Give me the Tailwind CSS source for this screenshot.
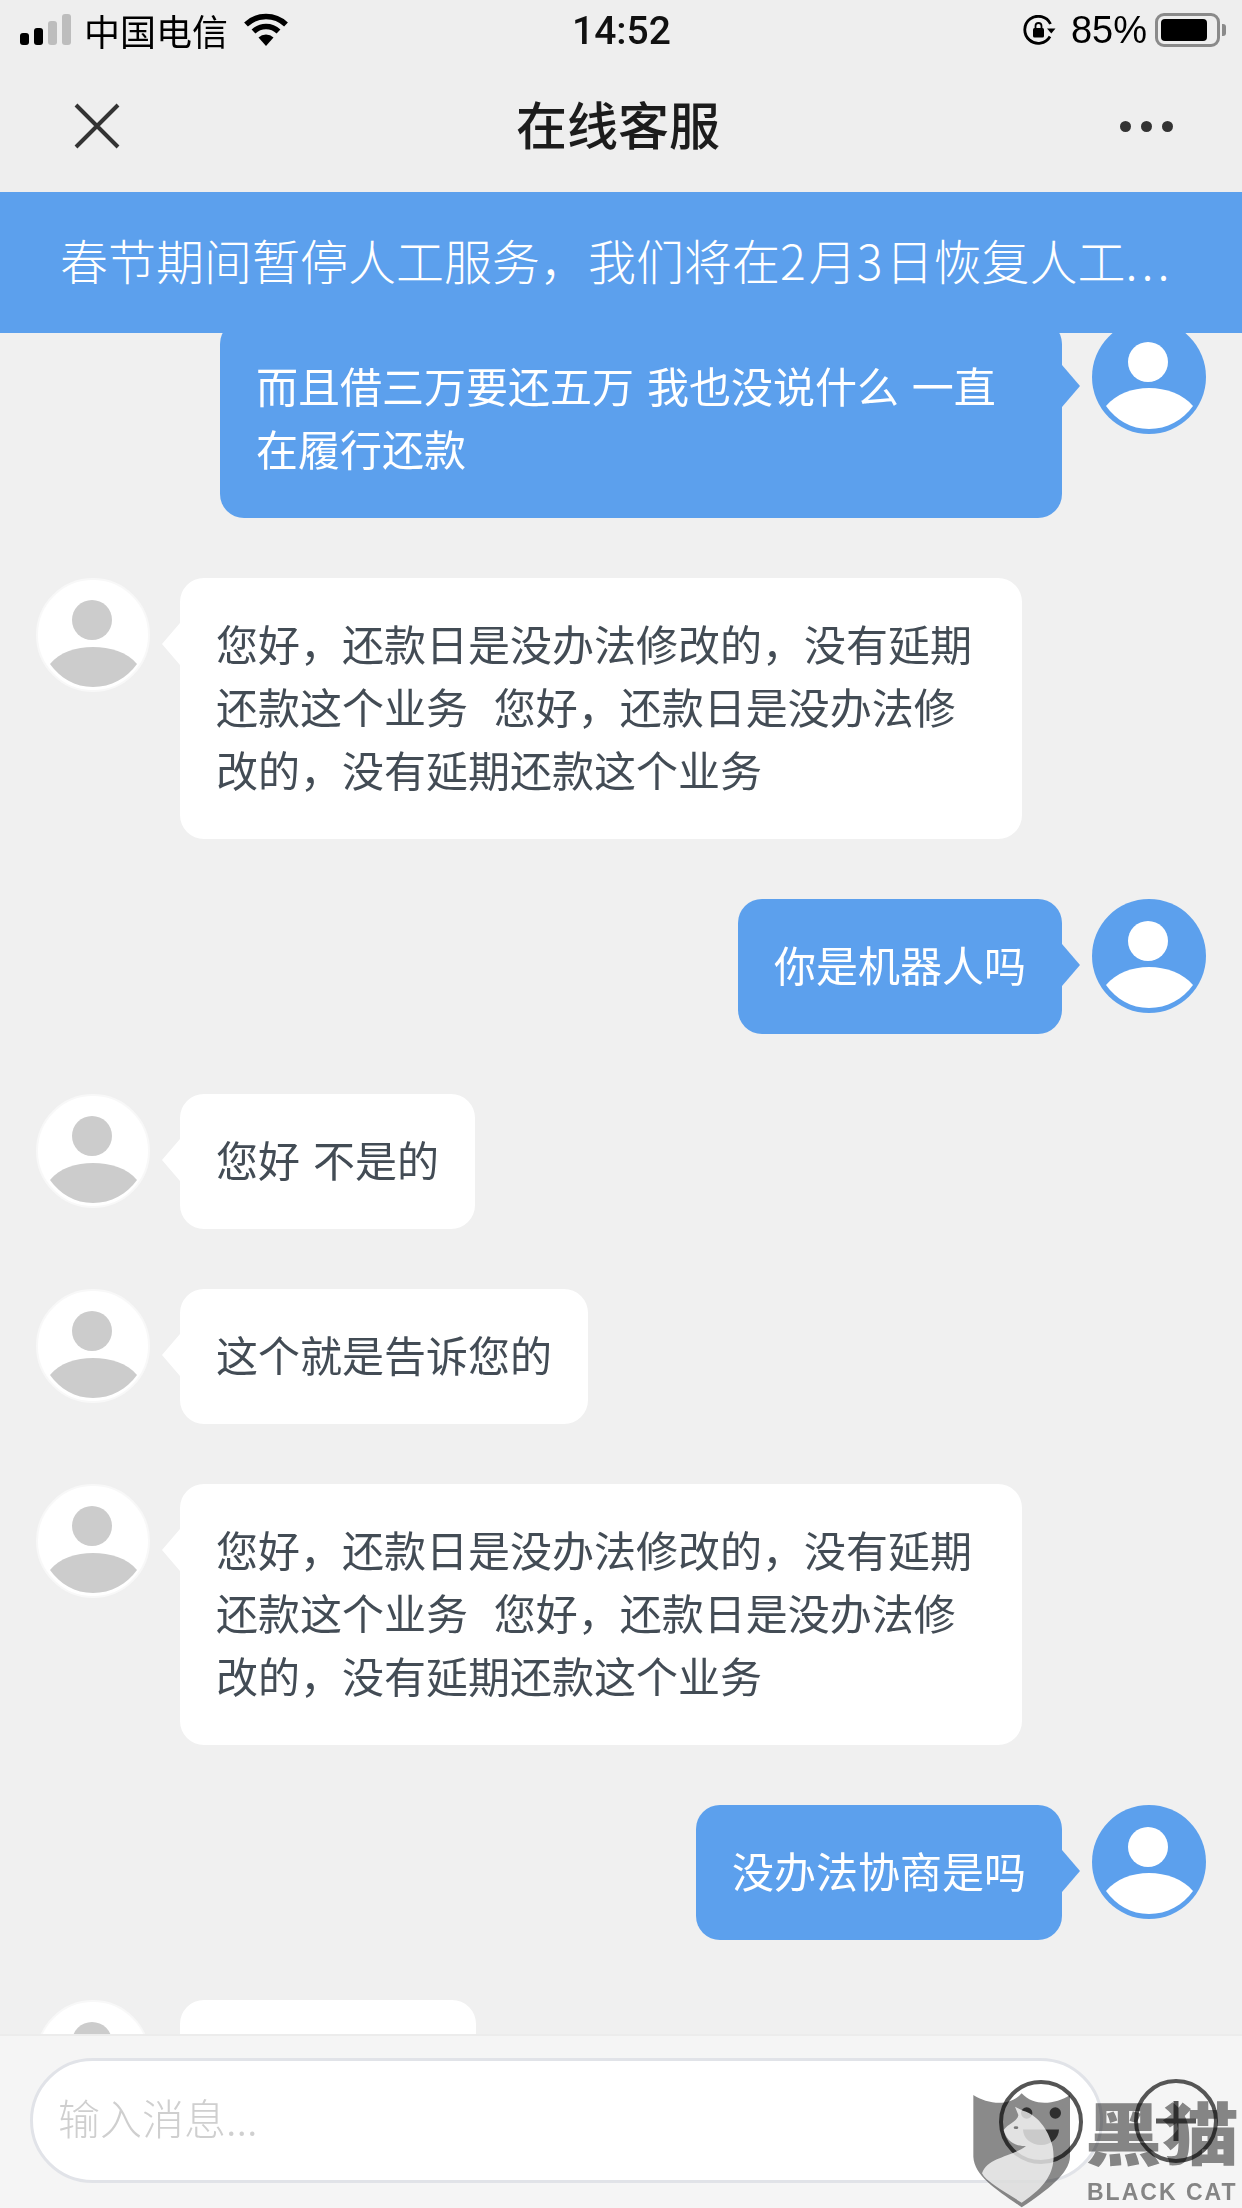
<!DOCTYPE html>
<html lang="zh-CN">
<head>
  <meta charset="UTF-8" />
  <meta name="viewport" content="width=device-width, initial-scale=1.0"/>
  <title>在线客服</title>
  <script src="https://cdn.jsdelivr.net/npm/@tailwindcss/browser@4"></script>
</head>
<body class="w-[1242px] h-[2208px] overflow-hidden relative flex flex-col bg-[#f0f0f0] font-['Noto_Sans_CJK_SC','Liberation_Sans',sans-serif]">

  <!-- Status bar -->
  <div class="h-[60px] shrink-0 bg-[#eeeeee] relative flex items-center justify-between pl-[20px] pr-[16px] text-black">
    <div class="flex items-center">
      <div class="flex items-end gap-[5px] h-[31px] mt-[-1px]">
        <div class="w-[9px] h-[12px] rounded-[3px] bg-black"></div>
        <div class="w-[9px] h-[17px] rounded-[3px] bg-black"></div>
        <div class="w-[9px] h-[24px] rounded-[3px] bg-[#bdbdbd]"></div>
        <div class="w-[9px] h-[31px] rounded-[3px] bg-[#bdbdbd]"></div>
      </div>
      <span class="ml-[13px] text-[36px] leading-none">中国电信</span>
      <svg class="ml-[15px] mt-[-2px]" width="46" height="33" viewBox="0 0 46 33" fill="none">
        <path d="M3 11.5A29 29 0 0 1 43 11.5" stroke="#000" stroke-width="5.5"/>
        <path d="M10.5 18.5A18 18 0 0 1 35.5 18.5" stroke="#000" stroke-width="5.5"/>
        <path d="M23 33L15.5 24.5A11 11 0 0 1 30.5 24.5Z" fill="#000"/>
      </svg>
    </div>
    <span class="absolute left-[572px] top-[10px] text-[39px] leading-[42px] font-medium font-['Roboto',sans-serif] text-[#111]">14:52</span>
    <div class="flex items-center">
      <svg width="33" height="31" viewBox="0 0 33 31" fill="none">
        <path d="M27 21.5A13.5 13.5 0 1 1 27.500 9" stroke="#000" stroke-width="2.8"/>
        <path d="M24 13.500h8.500l-4.200 5z" fill="#000"/>
        <rect x="10" y="13" width="11" height="9.500" rx="1.500" fill="#000"/>
        <path d="M12.500 13.500v-2.500a3 3 0 0 1 6 0v2.500" stroke="#000" stroke-width="1.800"/>
      </svg>
      <span class="ml-[15px] text-[38px] leading-none font-['Liberation_Sans',sans-serif]">85%</span>
      <div class="ml-[8px] w-[65px] h-[34px] rounded-[9px] border-[3px] border-[#8a8a8a] p-[3px] pr-[10px]">
        <div class="w-full h-full rounded-[4px] bg-black"></div>
      </div>
      <div class="ml-[2px] w-[4px] h-[12px] rounded-r-[3px] bg-[#8a8a8a]"></div>
    </div>
  </div>

  <!-- Nav bar -->
  <div class="h-[132px] shrink-0 bg-[#eeeeee] relative flex items-center justify-center">
    <svg class="absolute left-[74px] top-[43px]" width="46" height="46" viewBox="0 0 46 46" fill="none">
      <path d="M2 2L44 44M44 2L2 44" stroke="#333" stroke-width="4"/>
    </svg>
    <h1 class="text-[51px] leading-none font-medium text-[#1c1c1c] mt-[-6px] mr-[6px]">在线客服</h1>
    <div class="absolute left-[1120px] top-[61px] flex gap-[10px]">
      <div class="w-[11px] h-[11px] rounded-full bg-[#333]"></div>
      <div class="w-[11px] h-[11px] rounded-full bg-[#333]"></div>
      <div class="w-[11px] h-[11px] rounded-full bg-[#333]"></div>
    </div>
  </div>

  <!-- Chat -->
  <div class="relative flex-1 overflow-hidden">
    <div class="absolute top-0 left-0 right-0 z-10 h-[141px] bg-[#5ca0ed] flex items-center pl-[60px] pb-[8px] text-white text-[48px] leading-none font-light whitespace-nowrap">春节期间暂停人工服务，我们将在<span class="tracking-[3px]">2</span>月<span class="tracking-[3px]">3</span>日恢复人工<span class="tracking-[4px]">...</span></div>

    <div class="pt-[128px] px-[36px] flex flex-col gap-[60px] text-[42px] leading-[63px] [word-spacing:3.5px] whitespace-pre-wrap text-[#434c55]">

      <div class="flex justify-end">
        <div class="relative w-[842px] rounded-[24px] bg-[#5ca0ed] text-white px-[36px] pt-[33px] pb-[39px] mr-[30px]">而且借三万要还五万 我也没说什么 一直
在履行还款<div class="absolute right-[-18px] top-[45px] w-[18px] h-[42px] bg-[#5ca0ed] [clip-path:polygon(0_0,100%_50%,0_100%)]"></div></div>
        <svg class="shrink-0" width="114" height="114" viewBox="0 0 114 114"><circle cx="57" cy="57" r="57" fill="#5ca0ed"/><circle cx="56" cy="42" r="20" fill="#fff"/><path d="M14 86C24 74 40 68 57 68C74 68 91 74 101 86C91 100 75 109 57 109C39 109 24 100 14 86Z" fill="#fff"/></svg>
      </div>

      <div class="flex">
        <svg class="shrink-0" width="114" height="114" viewBox="0 0 114 114"><circle cx="57" cy="57" r="56" fill="#fff" stroke="#f8f8f8" stroke-width="2"/><circle cx="56" cy="42" r="20" fill="#ccc"/><path d="M14 86C24 74 40 69 57 69C74 69 91 74 101 86C91 100 75 109 57 109C39 109 24 100 14 86Z" fill="#ccc"/></svg>
        <div class="relative ml-[30px] w-[842px] rounded-[24px] bg-white px-[36px] pt-[33px] pb-[39px]">您好，还款日是没办法修改的，没有延期
还款这个业务  您好，还款日是没办法修
改的，没有延期还款这个业务<div class="absolute left-[-18px] top-[45px] w-[18px] h-[42px] bg-white [clip-path:polygon(100%_0,0_50%,100%_100%)]"></div></div>
      </div>

      <div class="flex justify-end">
        <div class="relative rounded-[24px] bg-[#5ca0ed] text-white px-[36px] pt-[33px] pb-[39px] mr-[30px]">你是机器人吗<div class="absolute right-[-18px] top-[45px] w-[18px] h-[42px] bg-[#5ca0ed] [clip-path:polygon(0_0,100%_50%,0_100%)]"></div></div>
        <svg class="shrink-0" width="114" height="114" viewBox="0 0 114 114"><circle cx="57" cy="57" r="57" fill="#5ca0ed"/><circle cx="56" cy="42" r="20" fill="#fff"/><path d="M14 86C24 74 40 68 57 68C74 68 91 74 101 86C91 100 75 109 57 109C39 109 24 100 14 86Z" fill="#fff"/></svg>
      </div>

      <div class="flex">
        <svg class="shrink-0" width="114" height="114" viewBox="0 0 114 114"><circle cx="57" cy="57" r="56" fill="#fff" stroke="#f8f8f8" stroke-width="2"/><circle cx="56" cy="42" r="20" fill="#ccc"/><path d="M14 86C24 74 40 69 57 69C74 69 91 74 101 86C91 100 75 109 57 109C39 109 24 100 14 86Z" fill="#ccc"/></svg>
        <div class="relative ml-[30px] rounded-[24px] bg-white px-[36px] pt-[33px] pb-[39px]">您好 不是的<div class="absolute left-[-18px] top-[45px] w-[18px] h-[42px] bg-white [clip-path:polygon(100%_0,0_50%,100%_100%)]"></div></div>
      </div>

      <div class="flex">
        <svg class="shrink-0" width="114" height="114" viewBox="0 0 114 114"><circle cx="57" cy="57" r="56" fill="#fff" stroke="#f8f8f8" stroke-width="2"/><circle cx="56" cy="42" r="20" fill="#ccc"/><path d="M14 86C24 74 40 69 57 69C74 69 91 74 101 86C91 100 75 109 57 109C39 109 24 100 14 86Z" fill="#ccc"/></svg>
        <div class="relative ml-[30px] rounded-[24px] bg-white px-[36px] pt-[33px] pb-[39px]">这个就是告诉您的<div class="absolute left-[-18px] top-[45px] w-[18px] h-[42px] bg-white [clip-path:polygon(100%_0,0_50%,100%_100%)]"></div></div>
      </div>

      <div class="flex">
        <svg class="shrink-0" width="114" height="114" viewBox="0 0 114 114"><circle cx="57" cy="57" r="56" fill="#fff" stroke="#f8f8f8" stroke-width="2"/><circle cx="56" cy="42" r="20" fill="#ccc"/><path d="M14 86C24 74 40 69 57 69C74 69 91 74 101 86C91 100 75 109 57 109C39 109 24 100 14 86Z" fill="#ccc"/></svg>
        <div class="relative ml-[30px] w-[842px] rounded-[24px] bg-white px-[36px] pt-[33px] pb-[39px]">您好，还款日是没办法修改的，没有延期
还款这个业务  您好，还款日是没办法修
改的，没有延期还款这个业务<div class="absolute left-[-18px] top-[45px] w-[18px] h-[42px] bg-white [clip-path:polygon(100%_0,0_50%,100%_100%)]"></div></div>
      </div>

      <div class="flex justify-end">
        <div class="relative rounded-[24px] bg-[#5ca0ed] text-white px-[36px] pt-[33px] pb-[39px] mr-[30px]">没办法协商是吗<div class="absolute right-[-18px] top-[45px] w-[18px] h-[42px] bg-[#5ca0ed] [clip-path:polygon(0_0,100%_50%,0_100%)]"></div></div>
        <svg class="shrink-0" width="114" height="114" viewBox="0 0 114 114"><circle cx="57" cy="57" r="57" fill="#5ca0ed"/><circle cx="56" cy="42" r="20" fill="#fff"/><path d="M14 86C24 74 40 68 57 68C74 68 91 74 101 86C91 100 75 109 57 109C39 109 24 100 14 86Z" fill="#fff"/></svg>
      </div>

      <div class="flex">
        <svg class="shrink-0" width="114" height="114" viewBox="0 0 114 114"><circle cx="57" cy="57" r="56" fill="#fff" stroke="#f8f8f8" stroke-width="2"/><circle cx="56" cy="42" r="20" fill="#ccc"/><path d="M14 86C24 74 40 69 57 69C74 69 91 74 101 86C91 100 75 109 57 109C39 109 24 100 14 86Z" fill="#ccc"/></svg>
        <div class="relative ml-[30px] w-[296px] h-[135px] rounded-[24px] bg-white"></div>
      </div>
    </div>
  </div>

  <!-- Input bar -->
  <div class="h-[174px] shrink-0 bg-[#f5f5f5] border-t-2 border-[#ececec] flex items-center pl-[30px] pb-[3px]">
    <div class="w-[1073px] h-[125px] rounded-full border-[3px] border-[#e1e3e8] bg-white flex items-center justify-between pl-[25px] pr-[17px] text-[42px] leading-none text-[#cfcfcf] font-light">
      <span class="mb-[8px]">输入消息...</span>
      <svg class="mt-[2px]" width="84" height="84" viewBox="0 0 84 84" fill="none">
        <circle cx="42" cy="42" r="40" stroke="#555" stroke-width="4"/>
        <circle cx="27.700" cy="33" r="5.700" fill="#555"/>
        <circle cx="56.300" cy="33" r="5.700" fill="#555"/>
        <path d="M24 49.500H60C60 58 52 65 42 65C32 65 24 58 24 49.500Z" fill="#555"/>
      </svg>
    </div>
    <div class="ml-[31px] w-[84px] h-[84px] rounded-full border-[4px] border-[#555] flex items-center justify-center">
      <svg width="40" height="40" viewBox="0 0 40 40"><path d="M0 20H40M20 0V40" stroke="#555" stroke-width="5" stroke-linecap="round"/></svg>
    </div>
  </div>

  <!-- Watermark -->
  <div class="absolute left-[821px] top-[1960px] w-[421px] h-[248px]">
    <svg class="absolute inset-0 mix-blend-multiply" width="421" height="248" viewBox="0 0 1263 744">
      <path d="M457 405C500 432 565 442 602 400C640 442 705 432 747 405V590C745 640 680 690 602 742C530 690 460 650 457 590Z" fill="#8a8a8a"/>
    </svg>
    <svg class="absolute inset-0" width="421" height="248" viewBox="0 0 1263 744">
      <path d="M582 440L606 452C645 462 682 505 695 560C705 620 690 670 602 728C545 692 495 665 483 640C500 592 570 592 615 558C580 560 555 540 548 510C562 490 590 484 592 465Z" fill="#fff" opacity="0.75"/>
      <ellipse cx="585" cy="503" rx="7" ry="4" fill="#777"/>
    </svg>
    <div class="absolute left-[264px] top-[131px] text-[77px] leading-[80px] font-black scale-y-88 text-[#8a8a8a] mix-blend-multiply whitespace-nowrap">黑猫</div>
    <div class="absolute left-[266px] top-[218px] text-[23px] leading-[28px] font-bold tracking-[2px] text-[#8a8a8a] mix-blend-multiply whitespace-nowrap font-['Liberation_Sans',sans-serif]">BLACK CAT</div>
  </div>

</body>
</html>
